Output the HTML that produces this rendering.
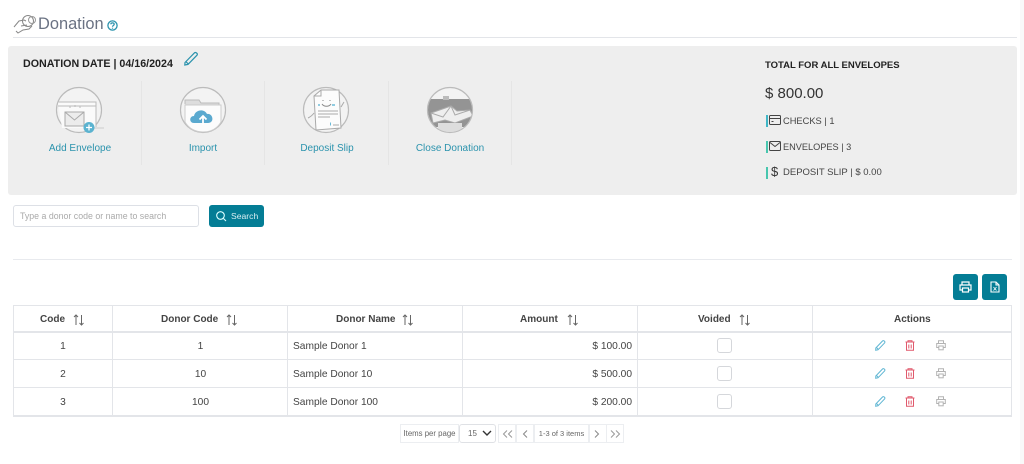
<!DOCTYPE html>
<html><head><meta charset="utf-8"><style>
html,body{margin:0;padding:0;background:#fff;width:1024px;height:464px;overflow:hidden}
body{font-family:"Liberation Sans",sans-serif;color:#333;position:relative}
.a{position:absolute;white-space:nowrap}
.c{text-align:center}
.l{position:absolute;background:#e3e5e9}
svg{position:absolute;overflow:visible}
.teal{color:#2b93ad;font-size:10px}
.th{font-size:10px;font-weight:bold;color:#444;top:313px;line-height:13px;text-align:center}
.td{font-size:10.200px;color:#444;line-height:13px}
.btn{position:absolute;background:#047d95;border-radius:3px}
.pg{position:absolute;top:424px;height:19px;border:1px solid #eceef1;box-sizing:border-box;font-size:7.500px;color:#666;line-height:18px;text-align:center}
</style></head><body>
<div class="a" style="left:1020px;top:0;width:4px;height:464px;background:#f9f9f9"></div>

<svg style="left:13px;top:14px" width="24" height="20" fill="none" stroke="#888" stroke-width="1"><path d="M1 13l5-6 5-1 2 1M3 17l2 2 5-3 6-1 3-3M8 12l6-1"/><circle cx="15" cy="7" r="5.500"/><circle cx="19" cy="6" r="3.500" stroke="#999"/></svg>
<div class="a" style="left:38px;top:14px;font-size:16.400px;color:#6a7283;line-height:21px">Donation</div>
<svg style="left:107px;top:20px" width="11" height="11" fill="none" stroke="#2b93ad" stroke-width="1.300"><circle cx="5.500" cy="5.500" r="4.600"/><path d="M3.800 4.300c.2-2 3.500-1.800 3.400 0 0 1.200-1.700 1.200-1.700 2.400"/><path d="M5.500 7.700v1"/></svg>
<div class="l" style="left:13px;top:37px;width:1004px;height:1px"></div>

<div class="a" style="left:8px;top:46px;width:1009px;height:149px;background:#eeeeee;border-radius:3px"></div>

<div class="a" style="left:23px;top:58px;font-size:10.700px;font-weight:bold;color:#222;line-height:13px">DONATION DATE | 04/16/2024</div>
<svg style="left:184px;top:51px" width="15" height="15" fill="none" stroke="#2b93ad" stroke-width="1.200"><path d="M1 11.500L10.500 1.800c1-1 3.600 .8 2.600 2.300L4 13.400l-3.200 .6zM2 10.800l2.500 2.300"/></svg>

<div class="l" style="left:141px;top:81px;width:1px;height:84px;background:#e5e5e5"></div>
<div class="l" style="left:264px;top:81px;width:1px;height:84px;background:#e5e5e5"></div>
<div class="l" style="left:388px;top:81px;width:1px;height:84px;background:#e5e5e5"></div>
<div class="l" style="left:511px;top:81px;width:1px;height:84px;background:#e5e5e5"></div>

<svg style="left:56px;top:87px" width="48" height="48" fill="none">
<circle cx="23" cy="23" r="22.500" fill="#f3f3f3" stroke="#bbb" stroke-width="1.200"/>
<path d="M2 15h38v26H6" fill="#fafafa"/>
<path d="M2 15h38v27M2 19h38" stroke="#bbb"/>
<rect x="9" y="25" width="19" height="14" fill="#ececec" stroke="#aaa"/><path d="M9 25l9.500 8 9.500-8" stroke="#aaa"/>
<path d="M14 21v-2M19 20v-2M24 21v-2" stroke="#bbb"/>
<path d="M36 41h12" stroke="#ddd" stroke-width="2"/>
<circle cx="33" cy="40.500" r="5.500" fill="#5bb3d0"/><path d="M33 37.500v6M30 40.500h6" stroke="#fff" stroke-width="1.300"/>
</svg>
<div class="a c teal" style="left:20px;width:120px;top:142px;line-height:14px">Add Envelope</div>

<svg style="left:180px;top:87px" width="46" height="46" fill="none">
<circle cx="23" cy="23" r="22.500" fill="#f3f3f3" stroke="#bbb" stroke-width="1.200"/>
<path d="M5 17v-4h14l2 3h18v2H5" fill="#ddd" stroke="#bbb"/>
<path d="M5 18h36v17c-4 7-10 10-18 10-7 0-14-3-18-10z" fill="#fcfcfc" stroke="#ccc"/>
<path d="M14 36c-5 0-5-7 0-7 1-6 10-8 13-2 6-1 8 9 1 9z" fill="#5aa9cf"/>
<path d="M23 38v-8M19.500 32.500l3.500-3.500 3.500 3.500" stroke="#fff" stroke-width="1.800"/>
</svg>
<div class="a c teal" style="left:143px;width:120px;top:142px;line-height:14px">Import</div>

<svg style="left:303px;top:87px" width="48" height="48" fill="none">
<circle cx="23" cy="23" r="22.500" fill="#f3f3f3" stroke="#bbb" stroke-width="1.200"/>
<path d="M18 3h18l2 38-25 2-2-34z" fill="#fcfcfc" stroke="#aaa"/>
<path d="M11 9h7V3" stroke="#aaa"/>
<path d="M19 17c2 3 7 3 9 0" stroke="#888"/><path d="M20 13v1M27 13v1" stroke="#888"/>
<path d="M15 18l2 0M29 18l3 0" stroke="#6cbbd8" stroke-width="1.500"/>
<path d="M15 24h20M15 27h20M15 30h12" stroke="#aaa"/>
<path d="M27 37h1" stroke="#6cbbd8" stroke-width="3"/><path d="M30 38h6" stroke="#aaa"/>
<path d="M11 26c-2 3-4 4-6 5M38 20l3-5" stroke="#aaa"/>
</svg>
<div class="a c teal" style="left:267px;width:120px;top:142px;line-height:14px">Deposit Slip</div>

<svg style="left:427px;top:87px" width="46" height="46" fill="none">
<clipPath id="c1"><circle cx="23" cy="23" r="22"/></clipPath>
<circle cx="23" cy="23" r="22.500" fill="#f3f3f3" stroke="#bbb" stroke-width="1.200"/>
<g clip-path="url(#c1)">
<path d="M1 12h44v28H1z" fill="#949494"/>
<rect x="16" y="9" width="6" height="4" fill="#bbb"/>
<path d="M4 26l20-7 6 5 13-1 3 6-18 7-10-3-12 3z" fill="#eee" stroke="#aaa"/>
<path d="M4 26l12 4 8-11M24 19l4 9 15-5" stroke="#aaa"/>
<path d="M11 36h24v11H11z" fill="#ddd"/>
</g>
</svg>
<div class="a c teal" style="left:390px;width:120px;top:142px;line-height:14px">Close Donation</div>

<div class="a" style="left:765px;top:59px;font-size:9.500px;font-weight:bold;color:#222;line-height:13px">TOTAL FOR ALL ENVELOPES</div>
<div class="a" style="left:765px;top:84px;font-size:15px;color:#333;line-height:20px">$ 800.00</div>

<div class="a" style="left:766px;top:115px;width:2px;height:12px;background:#3fb6c6"></div>
<svg style="left:769px;top:115px" width="13" height="11" fill="none" stroke="#444"><rect x=".5" y=".5" width="11" height="9" rx="1"/><path d="M1 3.500h10M2.500 6.500h2"/></svg>
<div class="a td" style="left:783px;top:114px;font-size:9.300px;line-height:14px">CHECKS | 1</div>

<div class="a" style="left:766px;top:141px;width:2px;height:12px;background:#47c6ae"></div>
<svg style="left:769px;top:141px" width="13" height="11" fill="none" stroke="#444"><rect x=".5" y=".5" width="11" height="9" rx="1"/><path d="M1 1.500l5 4 5-4"/></svg>
<div class="a td" style="left:783px;top:140px;font-size:9.200px;line-height:14px">ENVELOPES | 3</div>

<div class="a" style="left:766px;top:167px;width:2px;height:12px;background:#47c6ae"></div>
<div class="a" style="left:771px;top:164px;font-size:13px;line-height:16px;color:#333">$</div>
<div class="a td" style="left:783px;top:166px;font-size:9.500px;line-height:14px">DEPOSIT SLIP | $ 0.00</div>

<div class="a" style="left:13px;top:205px;width:186px;height:22px;box-sizing:border-box;border:1px solid #dde0e6;border-radius:3px;background:#fff;font-size:8.800px;color:#aaa;line-height:20px;padding-left:6px">Type a donor code or name to search</div>
<div class="btn" style="left:209px;top:205px;width:55px;height:22px"></div>
<svg style="left:216px;top:211px" width="11" height="11" fill="none" stroke="#dff" stroke-width="1.100"><circle cx="4.500" cy="4.500" r="3.800"/><path d="M7.500 7.500l2.500 2.500"/></svg>
<div class="a" style="left:231px;top:210px;font-size:8.600px;color:#d8eef2;line-height:13px">Search</div>

<div class="l" style="left:13px;top:259px;width:999px;height:1px;background:#e8eaee"></div>

<div class="btn" style="left:953px;top:274px;width:25px;height:26px"></div>
<svg style="left:959px;top:281px" width="13" height="12" fill="none" stroke="#fff" stroke-width="1.200"><path d="M3 4V1h7v3M3 9H1V4h11v5h-2"/><rect x="3.500" y="7" width="6" height="4"/></svg>
<div class="btn" style="left:982px;top:274px;width:25px;height:26px"></div>
<svg style="left:990px;top:281px" width="10" height="12" fill="none" stroke="#fff" stroke-width="1.100"><path d="M1 1h5l3 3v7H1zM6 1v3h3"/><path d="M3.500 6l3 3.500M6.500 6l-3 3.500" stroke-width=".8"/></svg>

<div class="l" style="left:13px;top:305px;width:999px;height:1px"></div>
<div class="l" style="left:13px;top:331px;width:999px;height:2px"></div>
<div class="l" style="left:13px;top:359px;width:999px;height:1px"></div>
<div class="l" style="left:13px;top:387px;width:999px;height:1px"></div>
<div class="l" style="left:13px;top:415px;width:999px;height:2px"></div>
<div class="l" style="left:13px;top:305px;width:1px;height:111px"></div>
<div class="l" style="left:112px;top:305px;width:1px;height:111px"></div>
<div class="l" style="left:287px;top:305px;width:1px;height:111px"></div>
<div class="l" style="left:462px;top:305px;width:1px;height:111px"></div>
<div class="l" style="left:637px;top:305px;width:1px;height:111px"></div>
<div class="l" style="left:812px;top:305px;width:1px;height:111px"></div>
<div class="l" style="left:1011px;top:305px;width:1px;height:111px"></div>

<div class="a th" style="left:40px">Code</div>
<div class="a th" style="left:161px">Donor Code</div>
<div class="a th" style="left:336px">Donor Name</div>
<div class="a th" style="left:520px">Amount</div>
<div class="a th" style="left:698px">Voided</div>
<div class="a th" style="left:894px">Actions</div>
<svg style="left:73px;top:314px" width="12" height="12" fill="none" stroke="#666"><path d="M3 11V1M1 3l2-2 2 2M8.500 1v10M6.500 9l2 2 2-2"/></svg>
<svg style="left:226px;top:314px" width="12" height="12" fill="none" stroke="#666"><path d="M3 11V1M1 3l2-2 2 2M8.500 1v10M6.500 9l2 2 2-2"/></svg>
<svg style="left:402px;top:314px" width="12" height="12" fill="none" stroke="#666"><path d="M3 11V1M1 3l2-2 2 2M8.500 1v10M6.500 9l2 2 2-2"/></svg>
<svg style="left:567px;top:314px" width="12" height="12" fill="none" stroke="#666"><path d="M3 11V1M1 3l2-2 2 2M8.500 1v10M6.500 9l2 2 2-2"/></svg>
<svg style="left:739px;top:314px" width="12" height="12" fill="none" stroke="#666"><path d="M3 11V1M1 3l2-2 2 2M8.500 1v10M6.500 9l2 2 2-2"/></svg>

<div class="a td c" style="left:13px;width:100px;top:340px">1</div>
<div class="a td c" style="left:113px;width:175px;top:340px">1</div>
<div class="a td" style="left:293px;top:340px">Sample Donor 1</div>
<div class="a td" style="right:392px;top:340px">$ 100.00</div>
<div class="a td c" style="left:13px;width:100px;top:368px">2</div>
<div class="a td c" style="left:113px;width:175px;top:368px">10</div>
<div class="a td" style="left:293px;top:368px">Sample Donor 10</div>
<div class="a td" style="right:392px;top:368px">$ 500.00</div>
<div class="a td c" style="left:13px;width:100px;top:396px">3</div>
<div class="a td c" style="left:113px;width:175px;top:396px">100</div>
<div class="a td" style="left:293px;top:396px">Sample Donor 100</div>
<div class="a td" style="right:392px;top:396px">$ 200.00</div>

<div class="a" style="left:717px;top:338px;width:15px;height:15px;box-sizing:border-box;border:1px solid #d5d7db;border-radius:3px;background:#fff"></div>
<div class="a" style="left:717px;top:366px;width:15px;height:15px;box-sizing:border-box;border:1px solid #d5d7db;border-radius:3px;background:#fff"></div>
<div class="a" style="left:717px;top:394px;width:15px;height:15px;box-sizing:border-box;border:1px solid #d5d7db;border-radius:3px;background:#fff"></div>

<svg style="left:875px;top:340px" width="11" height="11" fill="none" stroke="#5fb6d3"><path d="M.8 8L7.500 1c1-1 3 .5 2.200 1.800L3 9.800l-2.300 .5zM1.500 7.500l1.800 1.800"/></svg>
<svg style="left:905px;top:340px" width="10" height="11" fill="none" stroke="#e0596c"><path d="M.5 2h9M3 2V.7h4V2M1.500 2.500v7.800h7V2.500M3.800 4.500v4M6.200 4.500v4"/></svg>
<svg style="left:936px;top:340px" width="10" height="11" fill="none" stroke="#b3b3b3"><path d="M2.500 3.500V.8h5v2.700M2.500 7.500H.7v-4h8.600v4H7.500"/><rect x="2.800" y="6" width="4.400" height="3.800"/></svg>
<svg style="left:875px;top:368px" width="11" height="11" fill="none" stroke="#5fb6d3"><path d="M.8 8L7.500 1c1-1 3 .5 2.200 1.800L3 9.800l-2.300 .5zM1.500 7.500l1.800 1.800"/></svg>
<svg style="left:905px;top:368px" width="10" height="11" fill="none" stroke="#e0596c"><path d="M.5 2h9M3 2V.7h4V2M1.500 2.500v7.800h7V2.500M3.800 4.500v4M6.200 4.500v4"/></svg>
<svg style="left:936px;top:368px" width="10" height="11" fill="none" stroke="#b3b3b3"><path d="M2.500 3.500V.8h5v2.700M2.500 7.500H.7v-4h8.600v4H7.500"/><rect x="2.800" y="6" width="4.400" height="3.800"/></svg>
<svg style="left:875px;top:396px" width="11" height="11" fill="none" stroke="#5fb6d3"><path d="M.8 8L7.500 1c1-1 3 .5 2.200 1.800L3 9.800l-2.300 .5zM1.500 7.500l1.800 1.800"/></svg>
<svg style="left:905px;top:396px" width="10" height="11" fill="none" stroke="#e0596c"><path d="M.5 2h9M3 2V.7h4V2M1.500 2.500v7.800h7V2.500M3.800 4.500v4M6.200 4.500v4"/></svg>
<svg style="left:936px;top:396px" width="10" height="11" fill="none" stroke="#b3b3b3"><path d="M2.500 3.500V.8h5v2.700M2.500 7.500H.7v-4h8.600v4H7.500"/><rect x="2.800" y="6" width="4.400" height="3.800"/></svg>

<div class="pg" style="left:400px;width:59px;font-size:7.800px">Items per page</div>
<div class="pg" style="left:459px;width:37px;border-color:#dfe1e5;border-radius:3px;text-align:left;padding-left:8px;font-size:8px">15</div>
<svg style="left:482px;top:430px" width="10" height="7" fill="none" stroke="#333" stroke-width="1.400"><path d="M1 1l4 4 4-4"/></svg>
<div class="pg" style="left:498px;width:18px"></div>
<svg style="left:502px;top:430px" width="11" height="8" fill="none" stroke="#999"><path d="M5 .5L1.500 4 5 7.500M10 .5L6.500 4 10 7.500"/></svg>
<div class="pg" style="left:516px;width:18px"></div>
<svg style="left:522px;top:430px" width="6" height="8" fill="none" stroke="#888"><path d="M5 .5L1.500 4 5 7.500"/></svg>
<div class="pg" style="left:534px;width:55px">1-3 of 3 items</div>
<div class="pg" style="left:589px;width:18px"></div>
<svg style="left:594px;top:430px" width="6" height="8" fill="none" stroke="#888"><path d="M1 .5L4.500 4 1 7.500"/></svg>
<div class="pg" style="left:606px;width:18px"></div>
<svg style="left:610px;top:430px" width="11" height="8" fill="none" stroke="#999"><path d="M1 .5L4.500 4 1 7.500M6 .5L9.500 4 6 7.500"/></svg>
</body></html>
